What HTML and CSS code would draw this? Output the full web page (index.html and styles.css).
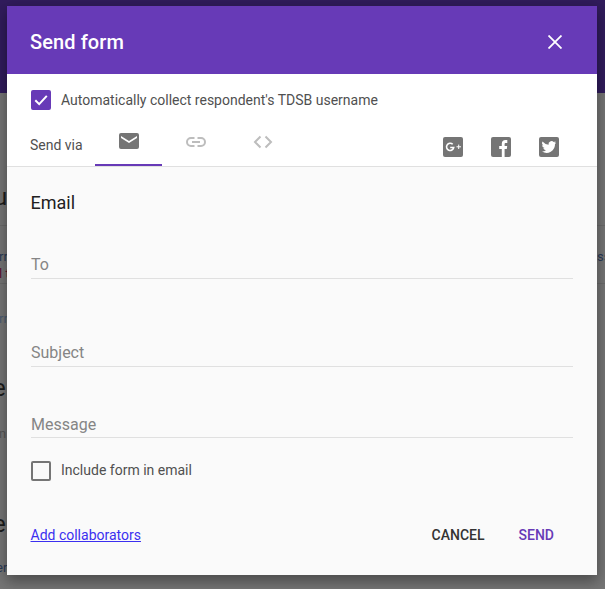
FILE: index.html
```html
<!DOCTYPE html>
<html lang="en">
<head>
<meta charset="utf-8">
<title>Send form</title>
<link rel="stylesheet" href="styles.css">
</head>
<body>
<div class="backdrop">
  <div class="backdrop-top"></div>
  <div class="rule rule-a"></div>
  <div class="rule rule-b"></div>
  <span class="bg big bg-1">u</span>
  <span class="bg small bg-2">rr</span>
  <span class="bg small red bg-3">l t</span>
  <span class="bg small bg-4">rr</span>
  <span class="bg big bg-5">e</span>
  <span class="bg small bg-6">n</span>
  <span class="bg big bg-7">e</span>
  <span class="bg small bg-8">er</span>
  <span class="bg small bg-9">ss</span>
</div>
<main class="dialog">
  <header class="dialog-head">
    <h1 class="dialog-title">Send form</h1>
    <svg class="close" width="14" height="14" viewBox="0 0 14 14"><path d="M.5.5l13 13M13.500.5l-13 13" stroke="#fff" stroke-width="1.800" fill="none"/></svg>
  </header>
  <section class="top-panel">
    <label class="check-row">
      <span class="box box-on">
        <svg width="14" height="12" viewBox="0 0 14 12"><path d="M1.300 6.200l3.900 3.900L12.800 1.900" stroke="#fff" stroke-width="2" fill="none"/></svg>
      </span>
      <span class="check-label">Automatically collect respondent's TDSB username</span>
    </label>
    <div class="via-row">
      <span class="via-label">Send via</span>
      <div class="tabs">
        <div class="tab tab-active">
          <svg width="20" height="16" viewBox="0 0 20 16"><path d="M2 0h16a2 2 0 0 1 2 2v12a2 2 0 0 1-2 2H2a2 2 0 0 1-2-2V2a2 2 0 0 1 2-2zm0 3v2l8 5 8-5V3l-8 5z" fill="#757575" fill-rule="evenodd"/></svg>
        </div>
        <div class="tab">
          <svg width="20" height="10" viewBox="0 0 20 10"><path d="M8.500 1H5a4 4 0 0 0 0 8h3.500M11.500 1H15a4 4 0 0 1 0 8h-3.500M6 5h8" stroke="#bdbdbd" stroke-width="2" fill="none"/></svg>
        </div>
        <div class="tab">
          <svg width="20" height="14" viewBox="0 0 20 14"><path d="M7.500 1.500L2 7l5.500 5.500M12.500 1.500L18 7l-5.500 5.500" stroke="#bdbdbd" stroke-width="2" fill="none"/></svg>
        </div>
      </div>
      <div class="socials">
        <span class="social">
          <svg width="20" height="20" viewBox="0 0 20 20"><rect width="20" height="20" rx="2" fill="#757575"/><path d="M9.700 7.300a3.600 3.600 0 1 0 1 3.200H7.200" stroke="#fff" stroke-width="1.600" fill="none"/><path d="M13.500 9.800h4.500M15.700 7.600v4.400" stroke="#fff" stroke-width="1"/></svg>
        </span>
        <span class="social">
          <svg width="20" height="20" viewBox="0 0 20 20"><rect width="20" height="20" rx="2" fill="#757575"/><path d="M10.800 20v-8H8.200V9h2.600V6.800c0-2.400 1.400-3.700 3.600-3.700h1.900V6h-1.400c-1 0-1.300.5-1.300 1.300V9h2.600l-.4 3h-2.200v8z" fill="#fff"/></svg>
        </span>
        <span class="social">
          <svg width="20" height="20" viewBox="0 0 20 20"><rect width="20" height="20" rx="2" fill="#757575"/><path d="M17 5.400a6 6 0 0 1-1.700.5 3 3 0 0 0 1.300-1.600 6 6 0 0 1-1.900.7 3 3 0 0 0-5.100 2.700A8.400 8.400 0 0 1 3.500 4.600a3 3 0 0 0 .9 3.900 3 3 0 0 1-1.300-.4 3 3 0 0 0 2.400 3 3 3 0 0 1-1.400 0 3 3 0 0 0 2.800 2.100A6 6 0 0 1 3 14.500 8.400 8.400 0 0 0 16 7.100a6 6 0 0 0 1-1.700z" fill="#fff"/></svg>
        </span>
      </div>
    </div>
  </section>
  <section class="email-panel">
    <h2 class="email-title">Email</h2>
    <div class="field field-to">To</div>
    <div class="field field-subject">Subject</div>
    <div class="field field-message">Message</div>
    <label class="check-row check-include">
      <span class="box"></span>
      <span class="check-label">Include form in email</span>
    </label>
    <footer class="actions">
      <a class="add-link" href="#">Add collaborators</a>
      <div class="buttons">
        <span class="btn btn-cancel">CANCEL</span>
        <span class="btn btn-send">SEND</span>
      </div>
    </footer>
  </section>
</main>
</body>
</html>
```
FILE: styles.css
```css
* { box-sizing: border-box; }
html, body { margin: 0; height: 100%; }
body {
  width: 605px;
  height: 589px;
  overflow: hidden;
  position: relative;
  background: #757575;
  font-family: Roboto, "Liberation Sans", sans-serif;
}
.backdrop { position: absolute; inset: 0; overflow: hidden; }
.backdrop-top { height: 93px; background: #311c5c; }
.rule { position: absolute; left: 0; right: 0; height: 1px; background: #6a6a6a; }
.rule-a { top: 225px; }
.rule-b { top: 283px; }
.bg { position: absolute; line-height: 1; color: #1c1c1c; }
.big { font-size: 24px; }
.small { font-size: 13px; color: #2a3a55; }
.red { color: #5a1030; }
.bg-1 { left: -6px; top: 185px; }
.bg-2 { left: -1px; top: 250px; }
.bg-3 { left: -1px; top: 267px; }
.bg-4 { left: -1px; top: 312px; color: #4a5a70; }
.bg-5 { left: -7px; top: 376px; }
.bg-6 { left: -1px; top: 427px; color: #555; }
.bg-7 { left: -7px; top: 512px; }
.bg-8 { left: -4px; top: 561px; }
.bg-9 { left: 597px; top: 250px; }

.dialog {
  position: absolute;
  left: 7px;
  top: 6px;
  width: 590px;
  height: 569px;
  display: flex;
  flex-direction: column;
  background: #fafafa;
  box-shadow: 0 8px 12px rgba(0,0,0,.22), 0 2px 14px rgba(0,0,0,.2);
}
.dialog-head {
  height: 68px;
  flex: none;
  display: flex;
  align-items: center;
  justify-content: space-between;
  padding: 4px 35px 0 23px;
  background: #673ab7;
}
.dialog-title { margin: 0; font-size: 20px; font-weight: 500; color: #fff; line-height: 24px; letter-spacing: .1px; }
.close { display: block; }

.top-panel { height: 93px; flex: none; background: #fff; border-bottom: 1px solid #e0e0e0; padding: 16px 0 0 24px; }
.check-row { display: flex; align-items: center; gap: 10px; }
.box { width: 20px; height: 20px; flex: none; border: 2px solid #757575; border-radius: 2px; display: flex; align-items: center; justify-content: center; }
.box-on { background: #673ab7; border-color: #673ab7; }
.check-label { font-size: 14px; line-height: 20px; color: #505050; }
.check-include .check-label { position: relative; top: -1px; }

.via-row { display: flex; height: 50px; margin: 17px 0 0 -1px; }
.via-label { width: 65px; font-size: 14px; line-height: 20px; color: #505050; padding-top: 8px; }
.tabs { display: flex; height: 39px; }
.tab { width: 67px; height: 39px; display: flex; justify-content: center; align-items: flex-start; padding-top: 6px; }
.tab:nth-child(2) { padding-top: 10px; }
.tab:nth-child(3) { padding-top: 8px; }
.tab-active { border-bottom: 2px solid #673ab7; }
.socials { display: flex; gap: 28px; margin-left: 147px; padding-top: 10px; }
.social { width: 20px; height: 20px; display: block; }
.social svg { display: block; }

.email-panel { flex: 1; padding: 0 24px; display: flex; flex-direction: column; }
.email-title { margin: 24px 0 0 -.5px; font-size: 18px; font-weight: 400; line-height: 24px; color: #212121; }
.field { font-size: 16px; line-height: 20px; color: #858585; border-bottom: 1px solid #e0e0e0; padding-bottom: 3px; }
.field-to { margin-top: 40px; }
.field-subject { margin-top: 64px; }
.field-message { margin-top: 48px; padding-bottom: 2px; }
.check-include { margin-top: 23px; }
.actions { display: flex; justify-content: space-between; align-items: center; margin-top: 34px; height: 40px; }
.add-link { font-size: 14px; color: #3b2ff0; text-decoration: underline; margin-left: -.5px; }
.buttons { display: flex; gap: 34px; margin-right: 19px; }
.btn { font-size: 14px; font-weight: 500; line-height: 20px; }
.btn-cancel { color: #333; }
.btn-send { color: #673ab7; }
```
